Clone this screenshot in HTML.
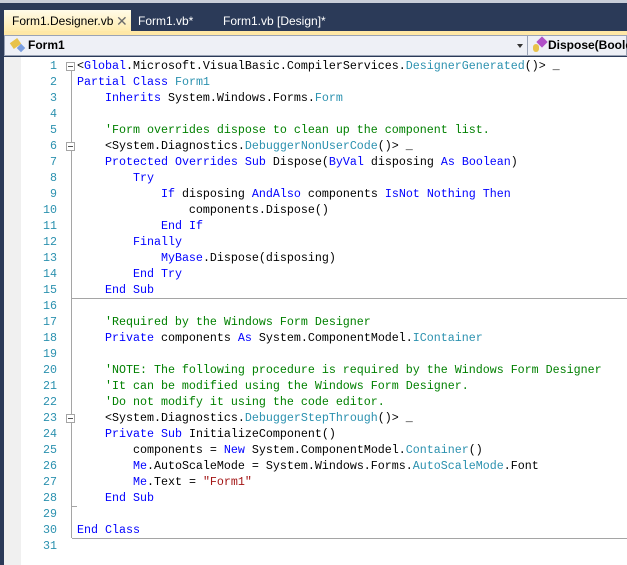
<!DOCTYPE html>
<html><head><style>
*{margin:0;padding:0;box-sizing:border-box}
body{width:627px;height:565px;overflow:hidden;background:#2b3a58;position:relative;font-family:"Liberation Sans",sans-serif}
.top{position:absolute;left:0;top:0;width:627px;height:3px;background:#c9ced8}
.tab{position:absolute;top:10px;height:23px;font-size:12px;line-height:22px;color:#fff;padding-left:8px}
.act{left:4px;width:127px;background:linear-gradient(#fffbe8,#ffeaa8);color:#000}
.x{position:absolute;left:112px;top:0;color:#6b6b6b;font-size:14px}
.ybar{position:absolute;left:4px;top:31px;width:623px;height:4px;background:#ffe8a6}
.dd{position:absolute;left:4px;top:35px;width:623px;height:21px;background:#eef0f6;border:1px solid #9aa3b5}
.dd1{position:absolute;left:0;top:0;width:522px;height:19px;font-weight:bold;font-size:12px;line-height:19px;padding-left:23px}
.dd2{position:absolute;left:522px;top:0;width:110px;height:19px;border-left:1px solid #9aa3b5;font-weight:bold;font-size:12px;line-height:19px;padding-left:20px}
.arrow{position:absolute;left:512px;top:8px;border-left:3px solid transparent;border-right:3px solid transparent;border-top:4px solid #333}
.ed{position:absolute;left:4px;top:57px;width:623px;height:508px;background:#fff}
.mg{position:absolute;left:4px;top:57px;width:17px;height:508px;background:#f0f0f0}
.code{position:absolute;left:0;top:58px;font-family:"Liberation Mono",monospace;font-size:11.67px;line-height:16px;white-space:pre}
.ln{position:absolute;left:20px;width:37px;text-align:right;color:#2b91af}
.c{position:absolute;left:77px;color:#000}
.k{color:#0000ff}.t{color:#2b91af}.g{color:#008000}.s{color:#a31515}
.vl{position:absolute;left:71px;width:1px;background:#a5a5a5}
.hl{position:absolute;height:1px;background:#a5a5a5}
.box{position:absolute;left:66px;width:9px;height:9px;border:1px solid #a5a5a5;background:#fff}
.box:after{content:"";position:absolute;left:1px;top:3px;width:5px;height:1px;background:#555}
</style></head><body>
<div class="top"></div>
<div class="tab act">Form1.Designer.vb<span class="x">✕</span></div>
<div class="tab" style="left:130px">Form1.vb*</div>
<div class="tab" style="left:215px">Form1.vb [Design]*</div>
<div class="ybar"></div>
<div class="dd"><div class="dd1"><span style="position:absolute;left:6px;top:4px;width:9px;height:7px;background:#e8c24a;transform:rotate(-35deg)"></span><span style="position:absolute;left:13px;top:9px;width:6px;height:6px;background:#7a9ee0;transform:rotate(45deg)"></span>Form1</div><span class="arrow"></span><div class="dd2"><span style="position:absolute;left:5px;top:8px;width:6px;height:8px;background:#e8c24a;border-radius:3px"></span><span style="position:absolute;left:10px;top:2px;width:8px;height:8px;background:#b050c8;transform:rotate(45deg)"></span>Dispose(Boolean)</div></div>
<div class="ed"></div>
<div class="mg"></div>
<div class="vl" style="top:67px;height:471px"></div>
<div class="hl" style="left:72px;top:298px;width:555px"></div>
<div class="hl" style="left:72px;top:506px;width:5px"></div>
<div class="hl" style="left:72px;top:538px;width:555px"></div>
<div class="box" style="top:62px"></div>
<div class="box" style="top:142px"></div>
<div class="box" style="top:414px"></div>
<div class="code">
<div class="ln" style="top:0">1
2
3
4
5
6
7
8
9
10
11
12
13
14
15
16
17
18
19
20
21
22
23
24
25
26
27
28
29
30
31</div>
<div class="c" style="top:0">&lt;<span class="k">Global</span>.Microsoft.VisualBasic.CompilerServices.<span class="t">DesignerGenerated</span>()&gt; _
<span class="k">Partial</span> <span class="k">Class</span> <span class="t">Form1</span>
    <span class="k">Inherits</span> System.Windows.Forms.<span class="t">Form</span>

    <span class="g">'Form overrides dispose to clean up the component list.</span>
    &lt;System.Diagnostics.<span class="t">DebuggerNonUserCode</span>()&gt; _
    <span class="k">Protected</span> <span class="k">Overrides</span> <span class="k">Sub</span> Dispose(<span class="k">ByVal</span> disposing <span class="k">As</span> <span class="k">Boolean</span>)
        <span class="k">Try</span>
            <span class="k">If</span> disposing <span class="k">AndAlso</span> components <span class="k">IsNot</span> <span class="k">Nothing</span> <span class="k">Then</span>
                components.Dispose()
            <span class="k">End</span> <span class="k">If</span>
        <span class="k">Finally</span>
            <span class="k">MyBase</span>.Dispose(disposing)
        <span class="k">End</span> <span class="k">Try</span>
    <span class="k">End</span> <span class="k">Sub</span>

    <span class="g">'Required by the Windows Form Designer</span>
    <span class="k">Private</span> components <span class="k">As</span> System.ComponentModel.<span class="t">IContainer</span>

    <span class="g">'NOTE: The following procedure is required by the Windows Form Designer</span>
    <span class="g">'It can be modified using the Windows Form Designer.</span>
    <span class="g">'Do not modify it using the code editor.</span>
    &lt;System.Diagnostics.<span class="t">DebuggerStepThrough</span>()&gt; _
    <span class="k">Private</span> <span class="k">Sub</span> InitializeComponent()
        components = <span class="k">New</span> System.ComponentModel.<span class="t">Container</span>()
        <span class="k">Me</span>.AutoScaleMode = System.Windows.Forms.<span class="t">AutoScaleMode</span>.Font
        <span class="k">Me</span>.Text = <span class="s">"Form1"</span>
    <span class="k">End</span> <span class="k">Sub</span>

<span class="k">End</span> <span class="k">Class</span>
</div>
</div>
</body></html>
